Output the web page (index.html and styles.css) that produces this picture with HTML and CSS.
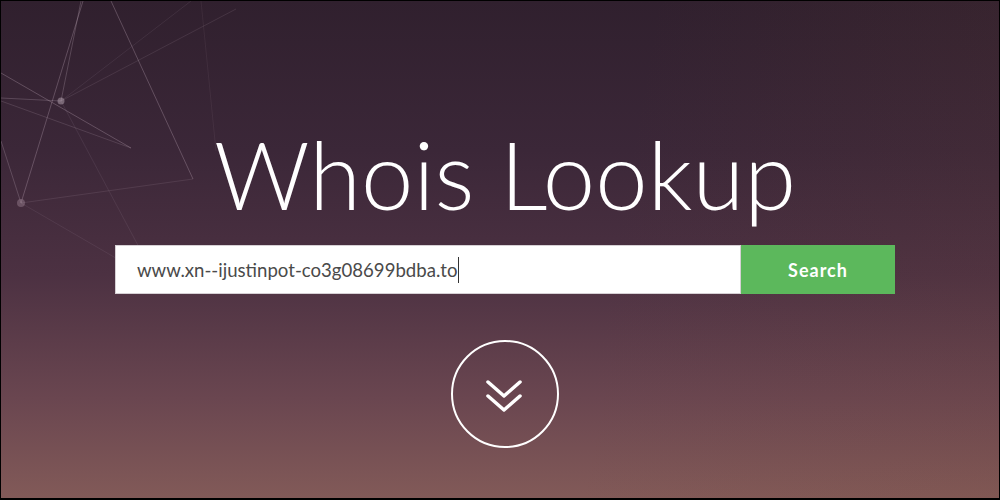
FILE: index.html
```html
<!DOCTYPE html>
<html lang="en">
<head>
<meta charset="utf-8">
<title>Whois Lookup</title>
<link rel="stylesheet" href="styles.css">
</head>
<body>
<div class="page">
  <svg class="network" width="260" height="260" viewBox="0 0 260 260" aria-hidden="true">
    <g stroke="#c9b3c2" stroke-width="1" fill="none">
      <line x1="82" y1="0" x2="20" y2="202" stroke-opacity="0.3"/>
      <line x1="80" y1="0" x2="60" y2="100" stroke-opacity="0.25"/>
      <line x1="110" y1="0" x2="192" y2="178" stroke-opacity="0.3"/>
      <line x1="0" y1="72" x2="130" y2="147" stroke-opacity="0.3"/>
      <line x1="0" y1="97" x2="60" y2="100" stroke-opacity="0.25"/>
      <line x1="0" y1="100" x2="130" y2="147" stroke-opacity="0.18"/>
      <line x1="0" y1="140" x2="20" y2="202" stroke-opacity="0.25"/>
      <line x1="60" y1="100" x2="235" y2="8" stroke-opacity="0.13"/>
      <line x1="60" y1="100" x2="190" y2="0" stroke-opacity="0.1"/>
      <line x1="20" y1="202" x2="192" y2="178" stroke-opacity="0.13"/>
      <line x1="60" y1="100" x2="140" y2="250" stroke-opacity="0.1"/>
      <line x1="200" y1="0" x2="215" y2="150" stroke-opacity="0.08"/>
      <line x1="20" y1="202" x2="120" y2="260" stroke-opacity="0.1"/>
    </g>
    <circle cx="60" cy="100" r="3.5" fill="#d8c6d2" fill-opacity="0.4"/>
    <circle cx="20" cy="202" r="4" fill="#a88f9e" fill-opacity="0.4"/>
  </svg>
  <main class="hero">
    <h1 class="title">Whois Lookup</h1>
    <form class="search">
      <div class="field">www.xn--ijustinpot-co3g08699bdba.to<span class="caret"></span></div>
      <button type="button" class="btn">Search</button>
    </form>
    <a class="scroll" href="#">
      <svg width="40" height="40" viewBox="0 0 40 40" aria-hidden="true">
        <polyline points="3,4 19,18 35,4" fill="none" stroke="#fff" stroke-width="3.5" stroke-linecap="round" stroke-linejoin="round"/>
        <polyline points="3,18 19,32 35,18" fill="none" stroke="#fff" stroke-width="3.5" stroke-linecap="round" stroke-linejoin="round"/>
      </svg>
    </a>
  </main>
</div>
</body>
</html>
```

FILE: styles.css
```css
html, body {
  margin: 0;
  padding: 0;
  background: #000;
}

.page {
  position: relative;
  box-sizing: border-box;
  margin: 1px 1px 0 1px;
  height: 497px;
  overflow: hidden;
  background:
    linear-gradient(100deg, rgba(0,0,0,0) 60%, rgba(120,70,50,0.12) 100%),
    linear-gradient(180deg, #30202e 0%, #3b2738 30%, #4c3142 55%, #6a4650 80%, #825a58 100%);
  font-family: Lato, "Liberation Sans", sans-serif;
}

.network {
  position: absolute;
  left: 0;
  top: 0;
}

.hero {
  position: relative;
  display: flex;
  flex-direction: column;
  align-items: center;
  padding-top: 114px;
}

.title {
  margin: 0 0 0 10px;
  font-family: Lato, sans-serif;
  font-weight: 300;
  font-size: 94px;
  line-height: 118px;
  color: #fff;
  letter-spacing: 0;
}

.search {
  display: flex;
  margin-top: 12px;
  margin-left: 10px;
  width: 780px;
  height: 49px;
}

.field {
  flex: 1;
  box-sizing: border-box;
  background: #fff;
  border: 1px solid #d6d0d4;
  padding-left: 21px;
  display: flex;
  align-items: center;
  font-size: 18.6px;
  color: #4a4a4a;
}

.caret {
  display: inline-block;
  width: 1px;
  height: 26px;
  background: #333;
  margin-left: 1px;
}

.btn {
  width: 154px;
  border: none;
  background: #5cb85c;
  color: #fff;
  font-family: Lato, sans-serif;
  font-weight: 700;
  font-size: 18px;
  letter-spacing: 1px;
  padding: 0;
}

.scroll {
  margin-top: 46px;
  margin-left: 10px;
  width: 104px;
  height: 104px;
  border: 2.5px solid #fff;
  border-radius: 50%;
  display: flex;
  align-items: center;
  justify-content: center;
}

.scroll svg {
  margin-top: 8px;
}
```
